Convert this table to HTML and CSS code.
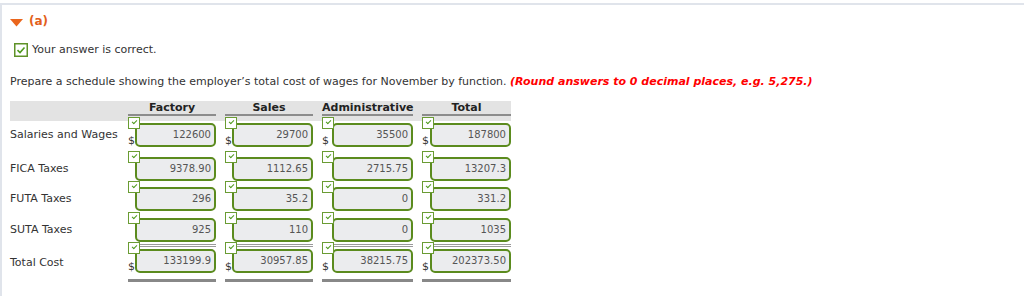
FILE: index.html
```html
<!DOCTYPE html>
<html>
<head>
<meta charset="utf-8">
<link rel="stylesheet" href="styles.css">
</head>
<body>
<div class="panel">
  <div class="part">
    <svg class="caret" width="13" height="8" viewBox="0 0 13 8"><polygon points="0,0 13,0 6.5,7.5" fill="#ea661d"/></svg>
    <span class="part-label">(a)</span>
  </div>
  <div class="status">
    <svg class="okbox" width="14" height="14" viewBox="0 0 14 14"><rect x="0.75" y="0.75" width="12.5" height="12.5" fill="#fff" stroke="#5f9228" stroke-width="1.5"/><path d="M3.5 7.2 L6 9.5 L10.5 4.5" fill="none" stroke="#4f9a1e" stroke-width="1.6"/></svg>
    <span>Your answer is correct.</span>
  </div>
  <p class="prompt">Prepare a schedule showing the employer’s total cost of wages for November by function. <em class="hint">(Round answers to 0 decimal places, e.g. 5,275.)</em></p>

  <div class="sched">
    <div class="row head">
      <div class="hcell blank"></div>
      <div class="hcell">Factory</div>
      <div class="hcell">Sales</div>
      <div class="hcell">Administrative</div>
      <div class="hcell">Total</div>
    </div>

    <div class="row r-first">
      <div class="label">Salaries and Wages</div>
      <div class="cell"><span class="chk"></span><span class="cur">$</span><span class="inp">122600</span></div>
      <div class="cell"><span class="chk"></span><span class="cur">$</span><span class="inp">29700</span></div>
      <div class="cell"><span class="chk"></span><span class="cur">$</span><span class="inp">35500</span></div>
      <div class="cell"><span class="chk"></span><span class="cur">$</span><span class="inp">187800</span></div>
    </div>

    <div class="row">
      <div class="label">FICA Taxes</div>
      <div class="cell"><span class="chk"></span><span class="inp">9378.90</span></div>
      <div class="cell"><span class="chk"></span><span class="inp">1112.65</span></div>
      <div class="cell"><span class="chk"></span><span class="inp">2715.75</span></div>
      <div class="cell"><span class="chk"></span><span class="inp">13207.3</span></div>
    </div>

    <div class="row r-futa">
      <div class="label">FUTA Taxes</div>
      <div class="cell"><span class="chk"></span><span class="inp">296</span></div>
      <div class="cell"><span class="chk"></span><span class="inp">35.2</span></div>
      <div class="cell"><span class="chk"></span><span class="inp">0</span></div>
      <div class="cell"><span class="chk"></span><span class="inp">331.2</span></div>
    </div>

    <div class="row r-suta">
      <div class="label">SUTA Taxes</div>
      <div class="cell"><span class="chk"></span><span class="inp">925</span></div>
      <div class="cell"><span class="chk"></span><span class="inp">110</span></div>
      <div class="cell"><span class="chk"></span><span class="inp">0</span></div>
      <div class="cell"><span class="chk"></span><span class="inp">1035</span></div>
    </div>

    <div class="row total">
      <div class="label">Total Cost</div>
      <div class="cell"><span class="chk"></span><span class="cur">$</span><span class="inp">133199.9</span></div>
      <div class="cell"><span class="chk"></span><span class="cur">$</span><span class="inp">30957.85</span></div>
      <div class="cell"><span class="chk"></span><span class="cur">$</span><span class="inp">38215.75</span></div>
      <div class="cell"><span class="chk"></span><span class="cur">$</span><span class="inp">202373.50</span></div>
    </div>
  </div>
</div>
</body>
</html>
```

FILE: styles.css
```css
html, body {
  margin: 0;
  padding: 0;
  background: #fff;
}

body {
  font-family: "DejaVu Sans", Verdana, sans-serif;
  font-size: 11px;
  color: #333;
}

.panel {
  margin-top: 3px;
  border-top: 2px solid #e0e4eb;
  border-left: 2px solid #e0e4eb;
  padding-left: 8px;
  height: 300px;
}

.part {
  display: flex;
  align-items: center;
  gap: 6px;
  height: 12px;
  margin-top: 10px;
}

.caret {
  display: block;
  margin-top: 3px;
}

.part-label {
  color: #e35f1c;
  font-weight: bold;
  font-size: 12px;
  line-height: 12px;
}

.status {
  display: flex;
  align-items: center;
  gap: 4px;
  height: 14px;
  margin-top: 16px;
  margin-left: 4px;
  line-height: 14px;
}

.okbox {
  display: block;
}

.prompt {
  margin: 18px 0 0 0;
  line-height: 14px;
  height: 14px;
  white-space: nowrap;
}

.hint {
  color: #f00;
  font-weight: bold;
  font-style: italic;
}

.sched {
  margin-top: 12px;
  width: 501px;
}

.row {
  display: grid;
  grid-template-columns: 109px 88px 88px 91px 89px;
  column-gap: 9px;
}

.head {
  height: 20px;
  background: #e3e3e3;
  margin-bottom: -4px;
  align-items: start;
}

.hcell {
  height: 13px;
  line-height: 13px;
  text-align: center;
  font-weight: bold;
  color: #222;
  border-bottom: 2px solid #8c8c8c;
  padding-top: 0;
}

.hcell.blank {
  border-bottom: none;
}

.r-first {
  margin-bottom: 4px;
}

.r-suta {
  margin-top: 1px;
}

.label {
  align-self: end;
  height: 24px;
  line-height: 24px;
  white-space: nowrap;
}

.cell {
  position: relative;
  display: flex;
  align-items: flex-end;
  justify-content: flex-end;
  padding-top: 6px;
  height: 24px;
}

.chk {
  position: absolute;
  left: 0;
  top: 0;
  width: 12px;
  height: 12px;
  box-sizing: border-box;
  border: 1px solid #6a9c33;
  background: #fff;
  z-index: 2;
}

.chk::after {
  content: "";
  position: absolute;
  left: 3px;
  top: 2px;
  width: 4px;
  height: 2px;
  border-left: 1.5px solid #4f9a1e;
  border-bottom: 1.5px solid #4f9a1e;
  transform: rotate(-45deg);
}

.cur {
  margin-right: auto;
  line-height: 11px;
  color: #333;
  position: relative;
  top: -1px;
}

.inp {
  box-sizing: border-box;
  width: 81px;
  height: 24px;
  border: 2px solid #5b8b1e;
  border-radius: 5px;
  background: #ebecee;
  color: #555;
  text-align: right;
  padding-right: 3px;
  line-height: 20px;
  font-size: 10px;
}

.total {
  margin-top: 2px;
}

.total .cell {
  border-top: 3px double #9a9a9a;
  border-bottom: 3px solid #888;
  padding-top: 2px;
  padding-bottom: 6px;
}

.total .chk {
  top: -5px;
}

.total .label {
  align-self: start;
  margin-top: 7px;
}
```
